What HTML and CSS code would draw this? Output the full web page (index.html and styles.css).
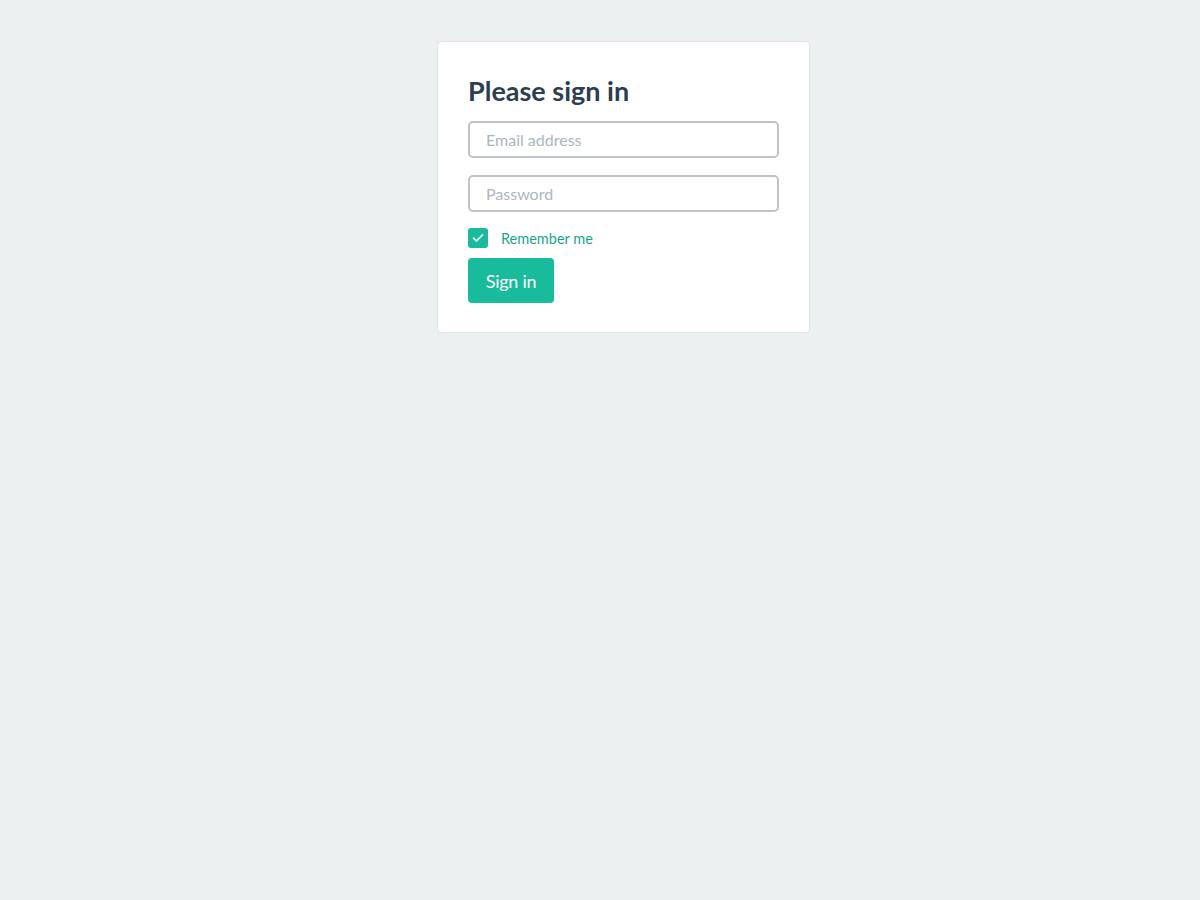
FILE: index.html
```html
<!DOCTYPE html>
<html lang="en">
<head>
<meta charset="utf-8">
<title>Please sign in</title>
<link rel="stylesheet" href="styles.css">
</head>
<body>
<main class="page">
  <form class="card">
    <h2 class="title">Please sign in</h2>
    <input class="field" type="email" placeholder="Email address">
    <input class="field" type="password" placeholder="Password">
    <label class="remember">
      <span class="box">
        <svg width="12" height="10" viewBox="0 0 12 10"><path d="M1.5 5.2 L4.5 8 L10.5 1.8" fill="none" stroke="#fff" stroke-width="1.6" stroke-linecap="round" stroke-linejoin="round"/></svg>
      </span>
      <span class="remember-text">Remember me</span>
    </label>
    <button class="btn" type="button">Sign in</button>
  </form>
</main>
</body>
</html>
```

FILE: styles.css
```css
html, body {
  margin: 0;
  padding: 0;
  background: #ecf0f1;
  font-family: Lato, "Open Sans", sans-serif;
}
.page {
  padding-top: 41px;
  padding-left: 437px;
}
.card {
  box-sizing: border-box;
  width: 373px;
  background: #fff;
  border: 1px solid #dfe3e6;
  border-radius: 4px;
  padding: 29px 30px 29px 30px;
  display: flex;
  flex-direction: column;
  align-items: flex-start;
}
.title {
  margin: 0 0 11px 0;
  font-size: 27px;
  font-weight: 700;
  line-height: 39px;
  color: #2c3e50;
}
.field {
  box-sizing: border-box;
  width: 311px;
  height: 37px;
  border: 2px solid #bdc3c7;
  border-radius: 5px;
  padding: 0 16px;
  font-family: Lato, sans-serif;
  font-size: 16px;
  color: #2c3e50;
  outline: none;
  margin: 0 0 17px 0;
}
.field + .field {
  margin-bottom: 16px;
}
.field::placeholder {
  color: #acb6c0;
}
.remember {
  display: flex;
  align-items: center;
  gap: 13px;
  margin-bottom: 10px;
}
.box {
  width: 20px;
  height: 20px;
  border-radius: 3px;
  background: #18bc9c;
  display: flex;
  align-items: center;
  justify-content: center;
}
.remember-text {
  font-size: 14.5px;
  color: #18a689;
}
.btn {
  width: 86px;
  height: 45px;
  border: none;
  border-radius: 4px;
  background: #18bc9c;
  color: #fff;
  font-family: Lato, sans-serif;
  font-size: 18px;
  letter-spacing: -0.3px;
  padding: 0;
}
```
